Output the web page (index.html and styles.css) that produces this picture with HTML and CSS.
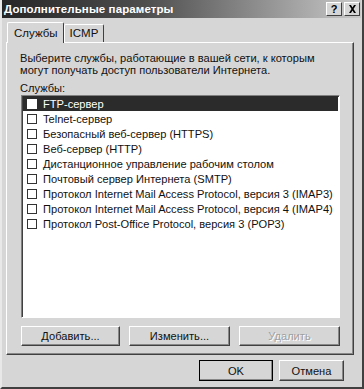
FILE: index.html
```html
<!DOCTYPE html>
<html lang="ru">
<head>
<meta charset="utf-8">
<link rel="stylesheet" href="styles.css">
</head>
<body>
<div class="dialog">
  <div class="titlebar">
    <span class="title">Дополнительные параметры</span>
    <div class="caption-btns">
      <span class="cbtn">?</span>
      <span class="cbtn close">
        <svg width="9" height="8" viewBox="0 0 9 8"><path d="M1 0h2l1.5 2.5L6 0h2L5.5 4 8 8H6L4.5 5.5 3 8H1l2.5-4z" fill="#000"/></svg>
      </span>
    </div>
  </div>
  <div class="tabs">
    <div class="tab active">Службы</div>
    <div class="tab">ICMP</div>
  </div>
  <div class="panel">
    <p class="desc">Выберите службы, работающие в вашей сети, к которым могут получать доступ пользователи Интернета.</p>
    <div class="label">Службы:</div>
    <div class="listbox">
      <div class="item selected"><span class="chk"></span>FTP-сервер</div>
      <div class="item"><span class="chk"></span>Telnet-сервер</div>
      <div class="item"><span class="chk"></span>Безопасный веб-сервер (HTTPS)</div>
      <div class="item"><span class="chk"></span>Веб-сервер (HTTP)</div>
      <div class="item"><span class="chk"></span>Дистанционное управление рабочим столом</div>
      <div class="item"><span class="chk"></span>Почтовый сервер Интернета (SMTP)</div>
      <div class="item"><span class="chk"></span>Протокол Internet Mail Access Protocol, версия 3 (IMAP3)</div>
      <div class="item"><span class="chk"></span>Протокол Internet Mail Access Protocol, версия 4 (IMAP4)</div>
      <div class="item"><span class="chk"></span>Протокол Post-Office Protocol, версия 3 (POP3)</div>
    </div>
    <div class="btnrow">
      <button class="btn b1">Добавить...</button>
      <button class="btn b2">Изменить...</button>
      <button class="btn b2 disabled">Удалить</button>
    </div>
  </div>
  <div class="footer">
    <button class="btn ok">OK</button>
    <button class="btn cancel">Отмена</button>
  </div>
</div>
</body>
</html>
```

FILE: styles.css
```css
html, body {
  margin: 0;
  padding: 0;
  background: #d4d4d4;
}
.dialog {
  width: 364px;
  height: 389px;
  box-sizing: border-box;
  background: #d6d6d6;
  border: 2px solid;
  border-top: 0;
  border-color: #e8e8e8 #404040 #404040 #e8e8e8;
  padding: 0 1px 0 0;
  font-family: "Liberation Sans", Arial, sans-serif;
  font-size: 11.1px;
  color: #111;
  display: flex;
  flex-direction: column;
}
.titlebar {
  height: 18px;
  background: linear-gradient(to right, #262626 0%, #4e4e4e 40%, #c9c9c9 100%);
  display: flex;
  align-items: center;
  justify-content: space-between;
  padding: 0 1px 0 2px;
}
.title {
  color: #fff;
  font-weight: bold;
  font-size: 11.5px;
  letter-spacing: 0.1px;
}
.caption-btns {
  display: flex;
  gap: 2px;
}
.cbtn {
  width: 16px;
  height: 14px;
  box-sizing: border-box;
  background: #d6d6d6;
  border: 1px solid;
  border-color: #fff #404040 #404040 #fff;
  font-weight: bold;
  font-size: 11px;
  display: flex;
  align-items: center;
  justify-content: center;
  color: #000;
}
.tabs {
  display: flex;
  align-items: flex-end;
  margin: 3px 0 0 5px;
  height: 21px;
}
.tab {
  height: 18px;
  box-sizing: border-box;
  padding: 2px 5px 0;
  border: 1px solid;
  border-bottom: none;
  border-color: #fff #404040 #404040 #fff;
  border-radius: 2px 2px 0 0;
  font-size: 11.5px;
}
.tab.active {
  height: 21px;
  padding: 4px 5px 0 6px;
  position: relative;
  z-index: 1;
  margin-bottom: -1px;
  background: #d6d6d6;
}
.panel {
  margin: 0 7px 0 4px;
  height: 313px;
  box-sizing: border-box;
  border: 1px solid;
  border-color: #fff #404040 #404040 #fff;
  box-shadow: inset -1px -1px 0 #888;
  padding: 9px 13px 0 13px;
}
.desc {
  margin: 0;
  line-height: 12px;
}
.label {
  margin-top: 6px;
  line-height: 12px;
}
.listbox {
  margin: 1px 0 0 1px;
  height: 223px;
  box-sizing: border-box;
  background: #fff;
  border: 1px solid;
  border-color: #808080 #fff #fff #808080;
  box-shadow: inset 1px 1px 0 #404040;
  padding: 0 1px 0 1px;
}
.item {
  height: 15px;
  display: flex;
  align-items: center;
  white-space: nowrap;
}
.item.selected {
  background: #2b2b2b;
  color: #fff;
}
.chk {
  flex-shrink: 0;
  width: 10px;
  height: 10px;
  box-sizing: border-box;
  border: 1px solid #333;
  background: #fff;
  margin: 0 6px 0 4px;
}
.item.selected .chk {
  border-color: #fff;
}
.btnrow {
  display: flex;
  justify-content: space-between;
  margin: 8px 0 0 1px;
}
.btn {
  font-family: "Liberation Sans", Arial, sans-serif;
  font-size: 11.1px;
  color: #111;
  background: #d6d6d6;
  height: 20px;
  box-sizing: border-box;
  border: 1px solid;
  border-color: #fff #404040 #404040 #fff;
  box-shadow: inset -1px -1px 0 #888;
  padding: 0;
}
.b1 { width: 99px; }
.b2 { width: 101px; }
.btn.disabled {
  color: #a0a0a0;
  text-shadow: 1px 1px 0 #fff;
}
.footer {
  display: flex;
  justify-content: flex-end;
  gap: 6px;
  margin: 5px 17px 0 0;
}
.footer .btn {
  height: 21px;
}
.ok {
  width: 74px;
  outline: 1px solid #000;
  outline-offset: -1px;
}
.cancel {
  width: 65px;
}
```
